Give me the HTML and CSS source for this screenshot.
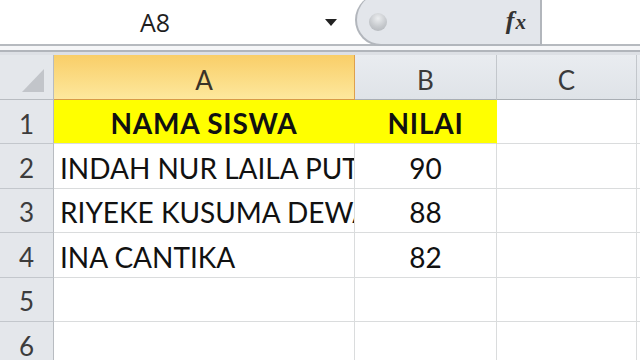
FILE: index.html
```html
<!DOCTYPE html>
<html>
<head>
<meta charset="utf-8">
<link rel="stylesheet" href="styles.css">
</head>
<body>
<div class="app">
  <div class="fbar">
    <div class="namebox">
      <span class="ref">A8</span>
      <span class="arrow"></span>
    </div>
    <div class="fxbox">
      <span class="grip"></span>
      <span class="fx"><span class="f">f</span><span class="x">x</span></span>
    </div>
    <div class="finput"></div>
  </div>
  <div class="sep"></div>
  <div class="sheet">
    <div class="corner"><span class="tri"></span></div>
    <div class="colhead sel">A</div>
    <div class="colhead">B</div>
    <div class="colhead">C</div>
    <div class="colhead last"></div>

    <div class="rowhead">1</div>
    <div class="cell yellow bold center">NAMA SISWA</div>
    <div class="cell yellow bold center">NILAI</div>
    <div class="cell"></div>
    <div class="cell"></div>

    <div class="rowhead">2</div>
    <div class="cell">INDAH NUR LAILA PUTRI</div>
    <div class="cell center">90</div>
    <div class="cell"></div>
    <div class="cell"></div>

    <div class="rowhead">3</div>
    <div class="cell">RIYEKE KUSUMA DEWANTI</div>
    <div class="cell center">88</div>
    <div class="cell"></div>
    <div class="cell"></div>

    <div class="rowhead">4</div>
    <div class="cell">INA CANTIKA</div>
    <div class="cell center">82</div>
    <div class="cell"></div>
    <div class="cell"></div>

    <div class="rowhead">5</div>
    <div class="cell"></div>
    <div class="cell"></div>
    <div class="cell"></div>
    <div class="cell"></div>

    <div class="rowhead">6</div>
    <div class="cell"></div>
    <div class="cell"></div>
    <div class="cell"></div>
    <div class="cell"></div>
  </div>
</div>
</body>
</html>
```

FILE: styles.css
```css
* { box-sizing: border-box; }
html, body { margin: 0; padding: 0; background: #fff; }
.app {
  width: 640px;
  height: 360px;
  overflow: hidden;
  font-family: Lato, "Liberation Sans", sans-serif;
}
.fbar {
  display: flex;
  height: 46px;
  border-bottom: 2px solid #b6babf;
  background: #fff;
}
.namebox {
  width: 355px;
  display: flex;
  align-items: center;
}
.ref {
  width: 310px;
  text-align: center;
  font-family: "Open Sans", "Noto Sans", sans-serif;
  font-size: 25px;
  color: #1e1e1e;
  line-height: 44px;
}
.arrow {
  width: 0;
  height: 0;
  margin-left: 15px;
  border-left: 6px solid transparent;
  border-right: 6px solid transparent;
  border-top: 7px solid #222;
}
.fxbox {
  width: 187px;
  height: 52px;
  margin-top: -6px;
  background: #e3e6eb;
  border: 2px solid #b2b6bc;
  border-radius: 28px 0 0 28px;
  border-top: none;
  display: flex;
  align-items: center;
  justify-content: space-between;
  padding: 6px 14px 0 12px;
}
.grip {
  width: 18px;
  height: 18px;
  border-radius: 50%;
  background: radial-gradient(circle at 50% 30%, #eceef0 0%, #c6c9cd 55%, #aeb2b7 100%);
}
.fx {
  font-family: "Liberation Serif", "DejaVu Serif", serif;
  font-style: italic;
  font-weight: bold;
  color: #333;
  font-size: 26px;
  line-height: 1;
  margin-top: -2px;
}
.fx .x { font-size: 21px; margin-left: 1px; }
.finput {
  flex: 1;
  background: #fff;
}
.sep {
  height: 9px;
  background: linear-gradient(#f5f6f8 0 4px, #b1b5bb 4px 6px, #dde0e5 6px 9px);
}
.sheet {
  display: grid;
  grid-template-columns: 54px 301px 142px 140px 1fr;
  grid-template-rows: 45px repeat(6, 44.4px);
}
.corner {
  background: #e4e7eb;
  border-right: 1px solid #b8bcc1;
  border-bottom: 1px solid #b8bcc1;
  position: relative;
}
.tri {
  position: absolute;
  left: 22px;
  top: 14px;
  width: 0;
  height: 0;
  border-left: 22px solid transparent;
  border-bottom: 23px solid #c2c5ca;
}
.colhead {
  background: linear-gradient(#e9ecf0, #dfe3e8);
  border-right: 1px solid #c3c7cc;
  border-bottom: 1px solid #a9aeb4;
  display: flex;
  align-items: center;
  justify-content: center;
  font-size: 26px;
  color: #3a3a3a;
  padding-top: 5px;
}
.colhead.sel {
  background: linear-gradient(#f9ce68, #fde89d);
  border-right: 1px solid #dea04d;
  border-bottom: 1px solid #d99a46;
  color: #3a3328;
}
.colhead.last { border-right: none; }
.rowhead {
  background: #e4e7eb;
  border-right: 1px solid #b8bcc1;
  border-bottom: 1px solid #c3c7cc;
  display: flex;
  align-items: center;
  justify-content: center;
  font-size: 26px;
  color: #3c3c3c;
  padding-top: 4px;
}
.cell {
  border-right: 1px solid #dadcdd;
  border-bottom: 1px solid #dadcdd;
  font-size: 28px;
  color: #111;
  white-space: nowrap;
  overflow: hidden;
  display: flex;
  align-items: flex-end;
  padding: 0 0 3px 6px;
}
.cell.center { justify-content: center; padding-left: 0; }
.cell.bold { font-weight: bold; letter-spacing: 0.8px; }
.cell.yellow { background: #ffff00; border-right-color: #ffff00; }
```
